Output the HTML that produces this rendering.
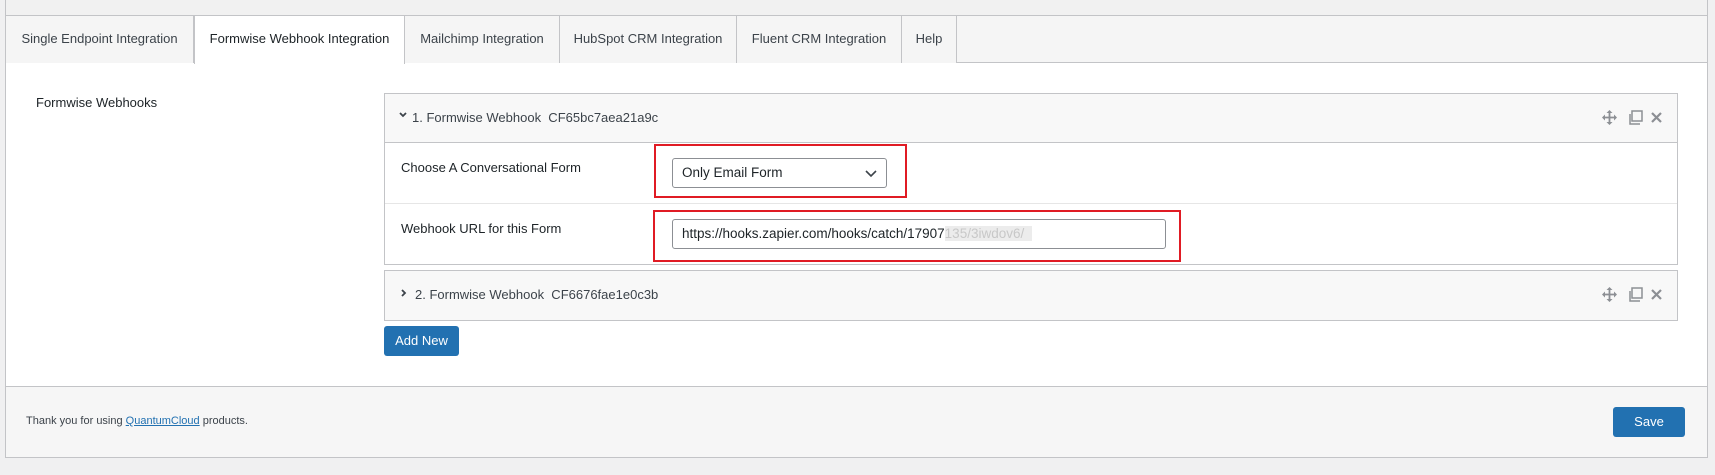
<!DOCTYPE html>
<html><head><meta charset="utf-8"><style>
*{box-sizing:border-box;margin:0;padding:0}
body{width:1715px;height:475px;background:#f0f0f1;font-family:"Liberation Sans",sans-serif;color:#1d2327;position:relative;overflow:hidden;font-size:13px}
.a{position:absolute}
.panel{left:5px;top:15px;width:1703px;height:443px;border:1px solid #c3c4c7;background:#fff}
.topstrip{left:5px;top:0;width:1703px;height:15px;background:#f1f1f1;border-left:1px solid #c3c4c7;border-right:1px solid #c3c4c7}
.tabbar{left:6px;top:16px;width:1701px;height:47px;background:#f5f5f5;border-bottom:1px solid #c3c4c7}
.tab{top:16px;height:47px;border-right:1px solid #c3c4c7;line-height:46px;text-align:center;font-size:13px;color:#3c434a;background:#f5f5f5}
.tab.on{background:#fff;height:48px;color:#1d2327}
.box{left:384px;width:1294px;border:1px solid #c3c4c7;background:#fff}
.hdr{background:#f8f8f8}
.lbl{font-size:13px;color:#1d2327}
.red{border:2px solid #e01b24}
.btn{background:#2271b1;color:#fff;border-radius:3px;text-align:center;font-size:13px}
</style></head><body>
<div class="a topstrip"></div>
<div class="a panel"></div>
<div class="a tabbar"></div>
<div class="a tab" style="left:6px;width:188px">Single Endpoint Integration</div>
<div class="a tab on" style="left:194px;width:211px;border-left:1px solid #c3c4c7">Formwise Webhook Integration</div>
<div class="a tab" style="left:405px;width:155px">Mailchimp Integration</div>
<div class="a tab" style="left:560px;width:177px">HubSpot CRM Integration</div>
<div class="a tab" style="left:737px;width:165px">Fluent CRM Integration</div>
<div class="a tab" style="left:902px;width:55px">Help</div>

<div class="a lbl" style="left:36px;top:95px">Formwise Webhooks</div>

<div class="a box hdr" style="top:93px;height:172px"></div>
<div class="a" style="left:385px;top:142px;width:1292px;height:122px;background:#fff;border-top:1px solid #c3c4c7"></div>
<div class="a" style="left:385px;top:203px;width:1292px;height:1px;background:#e6e6e6"></div>
<svg class="a" style="left:399px;top:112px" width="8" height="6" viewBox="0 0 8 6"><path d="M1 1l3 3 3-3" fill="none" stroke="#3c434a" stroke-width="1.8"/></svg>
<div class="a lbl" style="left:412px;top:110px;color:#3c434a">1. Formwise Webhook&nbsp; CF65bc7aea21a9c</div>

<div class="a lbl" style="left:401px;top:160px">Choose A Conversational Form</div>
<div class="a red" style="left:654px;top:144px;width:253px;height:54px"></div>
<div class="a" style="left:672px;top:158px;width:215px;height:30px;border:1px solid #8c8f94;border-radius:3px;background:#fff;line-height:28px;padding-left:9px;font-size:13.5px">Only Email Form
<svg class="a" style="right:9px;top:9px" width="12" height="10" viewBox="0 0 12 10"><path d="M1 3l5 5 5-5" fill="none" stroke="#3c434a" stroke-width="1.6"/></svg></div>

<div class="a lbl" style="left:401px;top:221px">Webhook URL for this Form</div>
<div class="a red" style="left:653px;top:210px;width:528px;height:52px"></div>
<div class="a" style="left:672px;top:219px;width:494px;height:30px;border:1px solid #8c8f94;border-radius:3px;background:#fff;line-height:28px;padding-left:9px;font-size:13.5px">https://hooks.zapier.com/hooks/catch/17907<span style="background:#ececec;color:#c8c8c8">135/3iwdov6/&nbsp;&nbsp;</span></div>

<div class="a box hdr" style="top:270px;height:51px"></div>
<svg class="a" style="left:401px;top:289px" width="6" height="8" viewBox="0 0 6 8"><path d="M1 1l3 3-3 3" fill="none" stroke="#3c434a" stroke-width="1.8"/></svg>
<div class="a lbl" style="left:415px;top:287px;color:#3c434a">2. Formwise Webhook&nbsp; CF6676fae1e0c3b</div>

<svg class="a" style="left:1602px;top:110px" width="15" height="15" viewBox="0 0 15 15"><path d="M7.5 1v13M1 7.5h13" stroke="#8c8f94" stroke-width="1.8"/><path d="M7.5 0l3 3h-6zM7.5 15l3-3h-6zM0 7.5l3-3v6zM15 7.5l-3-3v6z" fill="#8c8f94"/></svg>
<svg class="a" style="left:1628px;top:110px" width="15" height="15" viewBox="0 0 15 15"><rect x="4" y="1" width="10" height="10" fill="none" stroke="#8c8f94" stroke-width="1.5"/><path d="M2 4v10h10" fill="none" stroke="#8c8f94" stroke-width="1.5"/></svg>
<svg class="a" style="left:1651px;top:112px" width="11" height="11" viewBox="0 0 11 11"><path d="M1 1l9 9M10 1l-9 9" stroke="#8c8f94" stroke-width="2.2"/></svg>
<svg class="a" style="left:1602px;top:287px" width="15" height="15" viewBox="0 0 15 15"><path d="M7.5 1v13M1 7.5h13" stroke="#8c8f94" stroke-width="1.8"/><path d="M7.5 0l3 3h-6zM7.5 15l3-3h-6zM0 7.5l3-3v6zM15 7.5l-3-3v6z" fill="#8c8f94"/></svg>
<svg class="a" style="left:1628px;top:287px" width="15" height="15" viewBox="0 0 15 15"><rect x="4" y="1" width="10" height="10" fill="none" stroke="#8c8f94" stroke-width="1.5"/><path d="M2 4v10h10" fill="none" stroke="#8c8f94" stroke-width="1.5"/></svg>
<svg class="a" style="left:1651px;top:289px" width="11" height="11" viewBox="0 0 11 11"><path d="M1 1l9 9M10 1l-9 9" stroke="#8c8f94" stroke-width="2.2"/></svg>

<div class="a btn" style="left:384px;top:326px;width:75px;height:30px;line-height:30px">Add New</div>

<div class="a" style="left:6px;top:386px;width:1701px;height:71px;background:#f6f6f6;border-top:1px solid #c3c4c7"></div>
<div class="a" style="left:26px;top:415px;font-size:11px;color:#3c434a">Thank you for using <span style="color:#2271b1;text-decoration:underline">QuantumCloud</span> products.</div>
<div class="a btn" style="left:1613px;top:407px;width:72px;height:30px;line-height:30px">Save</div>
</body></html>
